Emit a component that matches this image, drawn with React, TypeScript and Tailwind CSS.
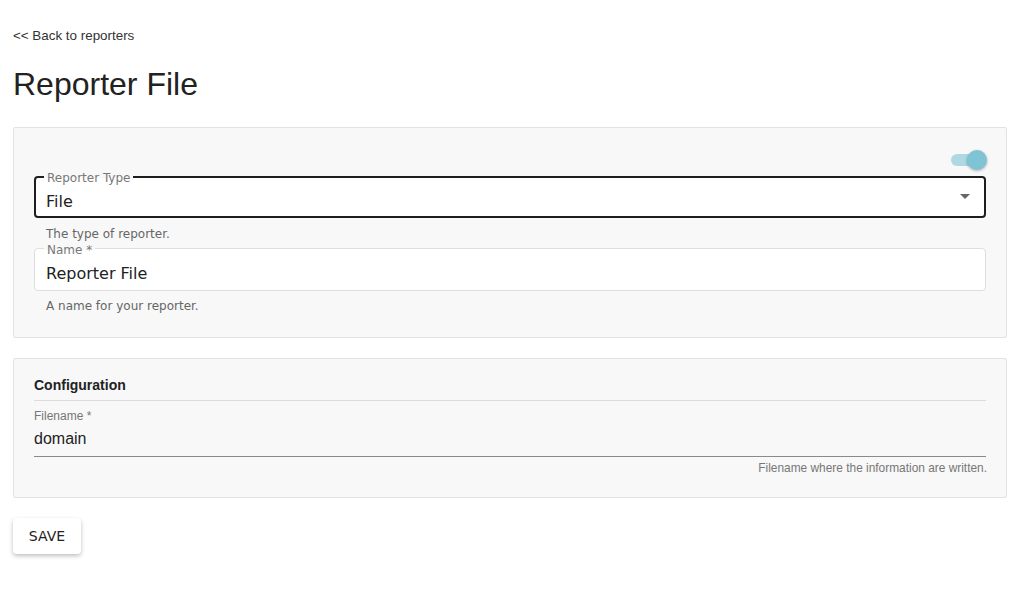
import React from "react";

const dv = { fontFamily: '"DejaVu Sans", sans-serif' };
const ls = { fontFamily: '"Liberation Sans", Arial, sans-serif' };

export default function App() {
  return (
    <div className="min-h-[590px] w-full bg-white pl-[13px] pr-[19px] pt-[27px] text-[#222]" style={ls}>
      <a className="block text-[13.4px] leading-[17px] text-[#333]">&lt;&lt; Back to reporters</a>
      <h1 className="mt-[20px] text-[32px] leading-[40px] text-[#222]">Reporter File</h1>

      <div className="mt-[23px] rounded-[2px] border border-[#e3e3e3] bg-[#f8f8f8] px-5 pb-[24px] pt-[26px]" style={dv}>
        <div className="flex justify-end">
          <div className="relative h-[12px] w-[35px] rounded-full bg-[#aed9e3]">
            <div className="absolute right-[-1px] top-[-4px] h-[20px] w-[20px] rounded-full bg-[#7ec4d4] shadow-[0_1px_3px_rgba(0,0,0,0.3)]" />
          </div>
        </div>
        <div className="relative mt-[10px] h-[42px] rounded-[4px] border-2 border-[#1e1e1e] bg-white">
          <span className="absolute left-[8px] top-[-7px] px-[3px] text-[12px] leading-[14px] text-[#777]" style={{ background: "linear-gradient(to bottom, #f8f8f8 50%, #ffffff 50%)" }}>Reporter Type</span>
          <div className="pl-[10px] pt-[15px] text-[16px] leading-[18px] text-[#222]">File</div>
          <svg className="absolute right-[14px] top-[16px]" width="10" height="5" viewBox="0 0 10 5">
            <path d="M0 0 L10 0 L5 5 Z" fill="#666" />
          </svg>
        </div>
        <div className="mt-[9px] pl-[12px] text-[12px] leading-[14px] text-[#666]">The type of reporter.</div>
        <div className="relative mt-[7px] h-[43px] rounded-[4px] border border-[#dedede] bg-white">
          <span className="absolute left-[9px] top-[-6px] px-[3px] text-[12px] leading-[14px] text-[#777]" style={{ background: "linear-gradient(to bottom, #f8f8f8 50%, #ffffff 50%)" }}>Name *</span>
          <div className="pl-[11px] pt-[16px] text-[16px] leading-[18px] text-[#222]">Reporter File</div>
        </div>
        <div className="mt-[8px] pl-[12px] text-[12px] leading-[14px] text-[#666]">A name for your reporter.</div>
      </div>

      <div className="mt-[20px] rounded-[2px] border border-[#e3e3e3] bg-[#f8f8f8] px-5 pb-[22px] pt-[18px]">
        <div className="border-b border-[#dcdcdc] pb-[7px] text-[14px] font-bold leading-[16px] text-[#222]">Configuration</div>
        <div className="mt-[8px] text-[12px] leading-[14px] text-[#777]">Filename *</div>
        <div className="mt-[7px] border-b border-[#8a8a8a] pb-[8px] text-[16px] leading-[18px] text-[#222]">domain</div>
        <div className="-mr-[1px] mt-[4px] text-right text-[11.9px] leading-[14px] text-[#777]">Filename where the information are written.</div>
      </div>

      <button className="mt-[20px] h-[36px] w-[68px] rounded-[4px] bg-white text-[14px] text-[#222] shadow-[0_2px_4px_rgba(0,0,0,0.25)]" style={dv}>SAVE</button>
    </div>
  );
}
